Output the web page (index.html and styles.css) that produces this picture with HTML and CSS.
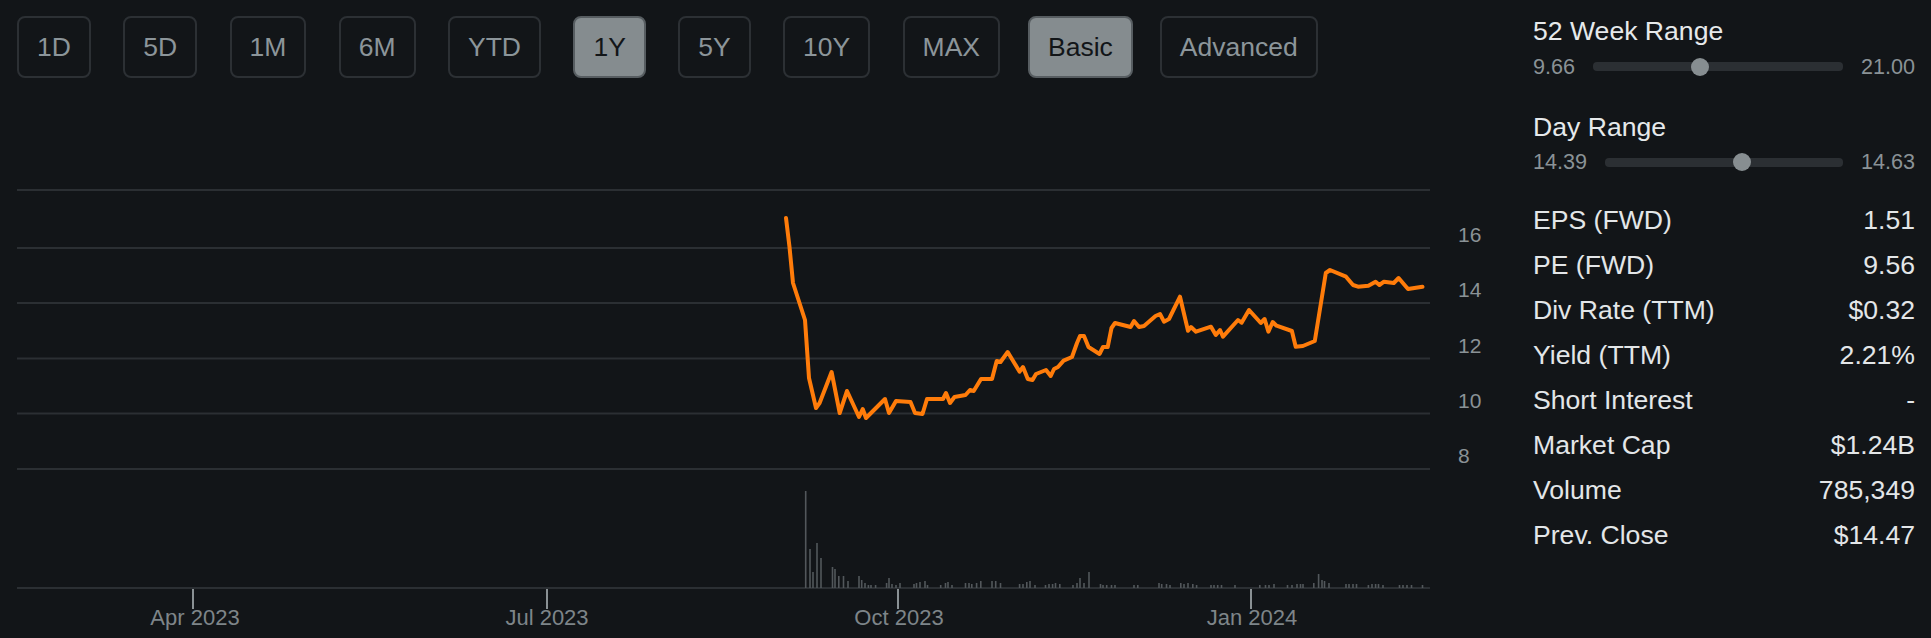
FILE: index.html
```html
<!DOCTYPE html>
<html lang="en">
<head>
<meta charset="utf-8">
<title>Chart</title>
<link rel="stylesheet" href="styles.css">
</head>
<body>
<div class="page">
  <main class="main">
    <div class="toolbar">
      <div class="ranges">
        <button class="btn">1D</button>
        <button class="btn">5D</button>
        <button class="btn">1M</button>
        <button class="btn">6M</button>
        <button class="btn">YTD</button>
        <button class="btn active">1Y</button>
        <button class="btn">5Y</button>
        <button class="btn">10Y</button>
        <button class="btn">MAX</button>
      </div>
      <div class="modes">
        <button class="btn active">Basic</button>
        <button class="btn">Advanced</button>
      </div>
    </div>
    <svg class="chart" width="1490" height="538" viewBox="17 100 1490 538" xmlns="http://www.w3.org/2000/svg">
      <g class="grid">
        <line x1="17" y1="190" x2="1430" y2="190"/>
        <line x1="17" y1="248" x2="1430" y2="248"/>
        <line x1="17" y1="303" x2="1430" y2="303"/>
        <line x1="17" y1="358.5" x2="1430" y2="358.5"/>
        <line x1="17" y1="413.5" x2="1430" y2="413.5"/>
        <line x1="17" y1="469" x2="1430" y2="469"/>
        <line x1="17" y1="588" x2="1430" y2="588"/>
      </g>
      <g class="ylabels">
        <text x="1458" y="242">16</text>
        <text x="1458" y="297">14</text>
        <text x="1458" y="353">12</text>
        <text x="1458" y="408">10</text>
        <text x="1458" y="463">8</text>
      </g>
      <path class="volume" d="M805.7 588V491 M810 588V549 M813 588V572 M817 588V543 M821 588V558 M832.5 588V567 M835 588V569 M838.8 588V576 M843.5 588V576 M848 588V581 M859 588V576 M861.7 588V580 M865 588V583 M868.4 588V585 M871 588V585 M875.6 588V585 M886.6 588V583 M889 588V578 M892 588V584 M896 588V585 M900 588V583 M914 588V584 M916.5 588V583 M920 588V582 M925 588V581 M927.5 588V585 M940.7 588V585 M945.5 588V583 M948 588V582 M952 588V585 M965.5 588V583 M969 588V583 M971.8 588V584 M976.6 588V583 M980.8 588V581 M992 588V581 M995.7 588V581 M1000.5 588V583 M1019.6 588V584 M1023 588V584 M1026.8 588V582 M1030 588V581 M1035 588V585 M1045.5 588V585 M1049 588V584 M1052.6 588V584 M1055.5 588V583 M1059.8 588V584 M1073 588V585 M1077 588V583 M1080 588V578 M1084 588V583 M1089 588V572 M1100.5 588V584 M1103 588V585 M1106.7 588V585 M1111.5 588V585 M1115 588V585 M1134 588V585 M1137.8 588V585 M1159 588V583 M1161.7 588V584 M1166.5 588V584 M1170 588V585 M1180.8 588V583 M1184 588V584 M1188 588V583 M1192.8 588V584 M1196.6 588V585 M1211 588V585 M1214 588V585 M1217.7 588V585 M1221.5 588V585 M1235 588V585 M1259.8 588V585 M1265.5 588V585 M1269 588V585 M1274 588V584 M1287.5 588V585 M1292 588V585 M1297 588V584 M1300.5 588V584 M1303 588V584 M1313.8 588V583 M1318.6 588V574 M1322 588V580 M1324.5 588V581 M1329 588V583 M1346 588V584 M1349 588V584 M1353 588V584 M1356.5 588V584 M1368.4 588V585 M1372 588V584 M1375.6 588V584 M1378.5 588V584 M1383 588V585 M1399.5 588V585 M1403 588V585 M1407 588V585 M1411.5 588V585 M1422.5 588V585"/>
      <polyline class="price" points="786,218 789.5,247 793,283 805,320 809,378 816,408 819.6,403 831.6,372 839.7,413 847,391 859,417 862.7,409 866,418 872,412 885,399 889,413 896,401 910.5,402 915,413 922.5,414 927,399 943,399 946,393 950,403 954.5,397 965.5,395 970,390 973.7,391 981,379 992,379 996.7,361 1000.5,362 1007.7,352 1019.6,371.7 1023,367 1027.8,379 1032.5,380 1036,374 1046,370 1050.7,376 1054,369 1058,367 1063.6,360.7 1072,357 1077,343 1080,336 1084,336 1088.5,347 1099.5,354 1103,347 1107.7,347 1111.5,328 1115,323 1130.6,327 1134,321 1139,327 1144,326 1155.5,316 1160,314 1164,321.7 1169,319 1180,296.7 1188,330.7 1191,327 1196,331.7 1211,326.7 1215.8,335 1220,330 1223,336.7 1238,320 1241.6,322.7 1249,310 1260.8,323 1264.6,319 1268.4,331.7 1272.7,322 1276.5,325.7 1291.9,331 1295.7,346.7 1302.9,346 1314.8,341 1325.8,273 1330,270 1346,276.7 1353,285 1358,286.7 1368.4,285.7 1375.6,281.7 1379.4,285 1384,281.7 1393.8,283 1398.6,278 1408,289 1422.5,286.7"/>
      <g class="ticks">
        <line x1="193" y1="589" x2="193" y2="609"/>
        <line x1="547" y1="589" x2="547" y2="609"/>
        <line x1="898" y1="589" x2="898" y2="609"/>
        <line x1="1251" y1="589" x2="1251" y2="609"/>
      </g>
      <g class="xlabels">
        <text x="195" y="625">Apr 2023</text>
        <text x="547" y="625">Jul 2023</text>
        <text x="899" y="625">Oct 2023</text>
        <text x="1252" y="625">Jan 2024</text>
      </g>
    </svg>
  </main>
  <aside class="aside">
    <section class="range">
      <div class="range-title">52 Week Range</div>
      <div class="range-row">
        <span>9.66</span>
        <div class="track"><div class="thumb" style="--p:0.424"></div></div>
        <span>21.00</span>
      </div>
    </section>
    <section class="range">
      <div class="range-title">Day Range</div>
      <div class="range-row">
        <span>14.39</span>
        <div class="track"><div class="thumb" style="--p:0.58"></div></div>
        <span>14.63</span>
      </div>
    </section>
    <dl class="stats">
      <div class="stat"><dt>EPS (FWD)</dt><dd>1.51</dd></div>
      <div class="stat"><dt>PE (FWD)</dt><dd>9.56</dd></div>
      <div class="stat"><dt>Div Rate (TTM)</dt><dd>$0.32</dd></div>
      <div class="stat"><dt>Yield (TTM)</dt><dd>2.21%</dd></div>
      <div class="stat"><dt>Short Interest</dt><dd>-</dd></div>
      <div class="stat"><dt>Market Cap</dt><dd>$1.24B</dd></div>
      <div class="stat"><dt>Volume</dt><dd>785,349</dd></div>
      <div class="stat"><dt>Prev. Close</dt><dd>$14.47</dd></div>
    </dl>
  </aside>
</div>
</body>
</html>
```

FILE: styles.css
```css
* { box-sizing: border-box; }

html, body {
  margin: 0;
  padding: 0;
  background: #121518;
  font-family: "Liberation Sans", Arial, sans-serif;
  width: 1931px;
  height: 638px;
  overflow: hidden;
}

.page {
  display: flex;
  padding: 16px 16px 0 17px;
}

.main {
  flex: 1;
  min-width: 0;
}

.toolbar {
  display: flex;
  gap: 28px;
}

.ranges {
  display: flex;
  gap: 32.4px;
}

.modes {
  display: flex;
  gap: 27px;
}

.btn {
  font-family: "Liberation Sans", Arial, sans-serif;
  font-size: 26.5px;
  height: 62px;
  line-height: 58px;
  padding: 0 18px;
  border: 2px solid #2c3034;
  border-radius: 8px;
  background: #121518;
  color: #8c959a;
  white-space: nowrap;
}

.btn.active {
  background: #858c8f;
  border-color: #575d61;
  color: #121518;
}

.chart {
  display: block;
  margin-top: 22px;
}

.grid line {
  stroke: #2b2f33;
  stroke-width: 2;
}

.ylabels text {
  font-family: "Liberation Sans", Arial, sans-serif;
  font-size: 21px;
  fill: #8a9296;
}

.xlabels text {
  font-family: "Liberation Sans", Arial, sans-serif;
  font-size: 22px;
  fill: #7e8589;
  text-anchor: middle;
}

.ticks line {
  stroke: #8a9194;
  stroke-width: 2;
}

.volume {
  stroke: #52575b;
  stroke-width: 1.6;
  fill: none;
}

.price {
  fill: none;
  stroke: #ff7c0a;
  stroke-width: 4;
  stroke-linejoin: round;
  stroke-linecap: round;
}

.aside {
  width: 382px;
  flex: none;
}

.range + .range {
  margin-top: 32px;
}

.range-title {
  font-size: 26.6px;
  line-height: 30px;
  color: #e6e9eb;
}

.range-row {
  display: flex;
  align-items: center;
  height: 26px;
  margin-top: 7.5px;
  font-size: 21.6px;
  color: #8a9296;
}

.track {
  flex: 1;
  position: relative;
  height: 9px;
  margin: 0 18px;
  background: #2b2f33;
  border-radius: 4px;
}

.thumb {
  position: absolute;
  top: 50%;
  left: calc(var(--p) * (100% - 18px));
  width: 18px;
  height: 18px;
  margin-top: -9px;
  border-radius: 50%;
  background: #878e91;
}

.stats {
  margin: 22.5px 0 0;
  padding: 0;
}

.stat {
  display: flex;
  justify-content: space-between;
  font-size: 26.6px;
  line-height: 45px;
  color: #e3e6e8;
}

.stat dt, .stat dd {
  margin: 0;
}
```
